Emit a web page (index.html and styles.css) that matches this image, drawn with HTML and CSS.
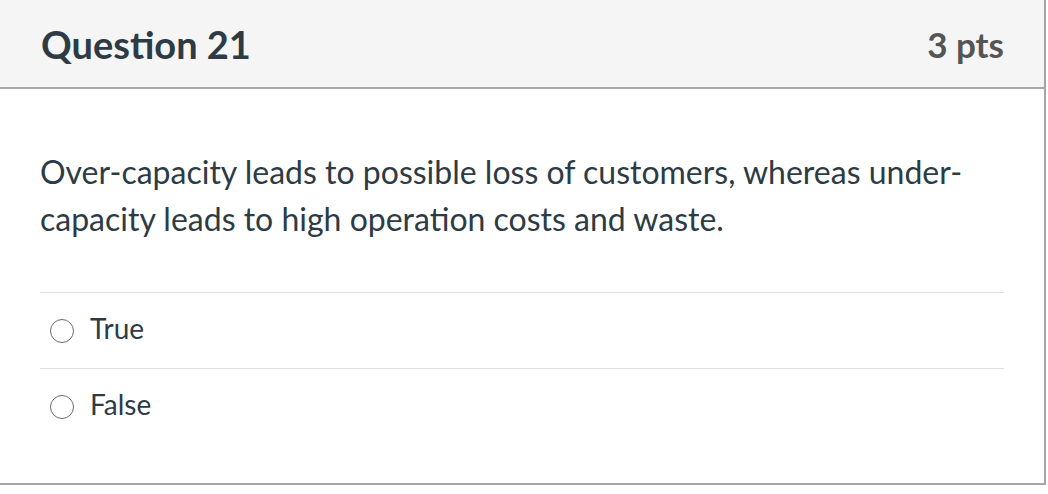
FILE: index.html
```html
<!DOCTYPE html>
<html>
<head>
<meta charset="utf-8">
<link rel="stylesheet" href="styles.css">
</head>
<body>
<div class="card">
  <div class="header">
    <h2 class="title">Question 21</h2>
    <div class="points">3 pts</div>
  </div>
  <div class="content">
    <p class="question">Over-capacity leads to possible loss of customers, whereas under-capacity leads to high operation costs and waste.</p>
    <div class="answers">
      <label class="answer"><span class="radio"></span><span class="label">True</span></label>
      <label class="answer"><span class="radio"></span><span class="label">False</span></label>
    </div>
  </div>
</div>
</body>
</html>
```
FILE: styles.css
```css
html, body {
  margin: 0;
  padding: 0;
  background: #ffffff;
}
body {
  font-family: Lato, "Noto Sans", sans-serif;
  color: #2d3b45;
}
.card {
  width: 1044px;
  height: 483px;
  border-right: 2px solid #a5a5a5;
  border-bottom: 2px solid #a5a5a5;
  display: flex;
  flex-direction: column;
}
.header {
  height: 87px;
  background: #f5f5f5;
  border-bottom: 2px solid #a8a8a8;
  padding: 0 40px 0 41px;
  display: flex;
  justify-content: space-between;
  align-items: center;
}
.title {
  margin: 0;
  font-size: 38px;
  font-weight: 700;
  color: #2d3b45;
}
.points {
  font-size: 35px;
  font-weight: 700;
  color: #555555;
}
.content {
  padding: 59px 40px 0 40px;
}
.question {
  margin: 0 0 50px 0;
  font-size: 32px;
  line-height: 47px;
}
.answers {
  display: flex;
  flex-direction: column;
}
.answer {
  display: flex;
  align-items: center;
  gap: 16px;
  height: 75px;
  padding-left: 10px;
  border-top: 1px solid #dddddd;
  font-size: 28px;
}
.label {
  padding-bottom: 5px;
}
.radio {
  width: 22px;
  height: 22px;
  border: 1.5px solid #6b6b6b;
  border-radius: 50%;
  flex: none;
}
```
